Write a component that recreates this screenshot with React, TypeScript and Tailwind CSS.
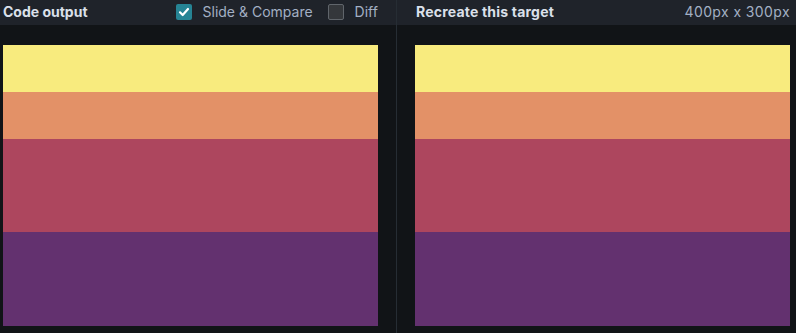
import React from 'react';

// Four bands of the target picture, in proportion to a 400x300 image
const bands = [
  { color: 'bg-[#f8eb7e]', grow: 'flex-1' },
  { color: 'bg-[#e39167]', grow: 'flex-1' },
  { color: 'bg-[#ad465e]', grow: 'flex-[2]' },
  { color: 'bg-[#63316f]', grow: 'flex-[2]' },
];

const Picture: React.FC = () => (
  <div className="flex h-[281px] w-[375px] flex-col">
    {bands.map((b, i) => (
      <div key={i} className={`${b.color} ${b.grow}`} />
    ))}
  </div>
);

const Check: React.FC<{ checked: boolean }> = ({ checked }) =>
  checked ? (
    <span className="flex h-[16px] w-[16px] items-center justify-center rounded-[2px] bg-[#268494]">
      <svg width="12" height="12" viewBox="0 0 12 12" fill="none">
        <path d="M2 6.3 4.7 9 10 3" stroke="white" strokeWidth="2.2" strokeLinecap="round" strokeLinejoin="round" />
      </svg>
    </span>
  ) : (
    <span className="h-[16px] w-[16px] rounded-[2px] border border-[#60656b] bg-[#34373b]" />
  );

export default function App() {
  return (
    <div className="flex h-[333px] w-[796px] bg-[#111417] font-['Inter',sans-serif] text-[14px]">
      <div className="flex w-[396px] flex-col">
        <div className="flex h-[25px] items-center bg-[#1f232a] pb-[2px] pl-[3px]">
          <span className="font-bold text-[#dbe0ea]">Code output</span>
          <div className="ml-[88px] flex items-center gap-[11px]">
            <Check checked />
            <span className="text-[#a3b0c4]">Slide &amp; Compare</span>
          </div>
          <div className="ml-[15px] flex items-center gap-[11px]">
            <Check checked={false} />
            <span className="text-[#a3b0c4]">Diff</span>
          </div>
        </div>
        <div className="pl-[3px] pt-[20px]">
          <Picture />
        </div>
      </div>
      <div className="w-px bg-[#262d34]" />
      <div className="flex flex-1 flex-col">
        <div className="flex h-[25px] items-center justify-between bg-[#1f232a] pb-[2px] pl-[19px] pr-[6px]">
          <span className="font-bold tracking-[0.2px] text-[#dbe0ea]">Recreate this target</span>
          <span className="tracking-[0.4px] text-[#a3b0c4]">400px x 300px</span>
        </div>
        <div className="pl-[18px] pt-[20px]">
          <Picture />
        </div>
      </div>
    </div>
  );
}
